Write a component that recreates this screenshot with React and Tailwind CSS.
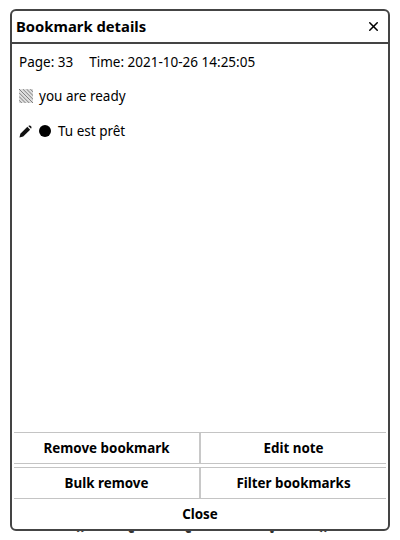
import { X } from "lucide-react";

function Btn({ label, left }) {
  return (
    <button className={`flex-1 h-full pt-px font-bold text-[13.4px] text-black ${left ? "border-r-2 border-[#c8c8c8]" : ""}`}>
      {label}
    </button>
  );
}

function Hatch() {
  return (
    <svg width="14" height="14" viewBox="0 0 15 15" className="shrink-0">
      <rect width="15" height="15" fill="#dedede" />
      <path
        d="M0 3L3 0M0 7L7 0M0 11L11 0M0 15L15 0M4 15L15 4M8 15L15 8M12 15L15 12"
        transform="matrix(-1 0 0 1 15 0)"
        stroke="#777"
        strokeWidth="1"
        fill="none"
      />
    </svg>
  );
}

function Pencil() {
  return (
    <svg width="13" height="13" viewBox="0 0 14 14" className="shrink-0">
      <path d="M0.5 13.5L1.5 9.5L9 2L12 5L4.5 12.5Z" fill="#111" />
      <path d="M10 1L11 0.5Q11.7 0.3 12.3 0.8L13.2 1.7Q13.7 2.3 13.4 3L13 4L10 1Z" fill="#111" />
    </svg>
  );
}

export default function App() {
  return (
    <div className="relative w-[400px] h-[540px] bg-white overflow-hidden font-['Noto_Sans',sans-serif] text-black">
      {/* page text sticking out under the dialog, only the bottom of it shows */}
      <div className="absolute left-[74px] top-[516px] h-[17px] overflow-hidden flex text-[17px] font-bold leading-[22px] text-[#333]">
        <span className="w-[53px]">«</span>
        <span className="w-[57px]">t</span>
        <span className="w-[83px]">t</span>
        <span className="w-[52px]">y</span>
        <span>»</span>
      </div>

      <div className="relative mt-[9px] ml-[10px] w-[380px] h-[522px] bg-white border-2 border-[#444] rounded-[6px] flex flex-col">
        <div className="h-[33px] shrink-0 border-b-2 border-[#444] flex items-center justify-between pl-[4px] pr-[7px]">
          <span className="font-bold text-[14.8px]">Bookmark details</span>
          <X size={15} strokeWidth={2.4} />
        </div>

        <div className="flex-1 pl-[7px] pt-[8px] text-[13.5px]">
          <div className="flex gap-[16px] h-[20px] items-center">
            <span>Page: 33</span>
            <span>Time: 2021-10-26 14:25:05</span>
          </div>
          <div className="flex items-center gap-[6px] mt-[14px] h-[20px]">
            <Hatch />
            <span>you are ready</span>
          </div>
          <div className="flex items-center mt-[15px] h-[20px]">
            <Pencil />
            <span className="w-[12px] h-[12px] rounded-full bg-black ml-[7px] mr-[7px]" />
            <span>Tu est prêt</span>
          </div>
        </div>

        <div className="mx-[2px] shrink-0 text-center">
          <div className="flex h-[32px] border-y border-[#c4c4c4]">
            <Btn label="Remove bookmark" left />
            <Btn label="Edit note" />
          </div>
          <div className="flex h-[32px] border-y border-[#c4c4c4] mt-[3px]">
            <Btn label="Bulk remove" left />
            <Btn label="Filter bookmarks" />
          </div>
          <button className="w-full h-[30px] pt-px font-bold text-[13.4px]">Close</button>
        </div>
      </div>
    </div>
  );
}
